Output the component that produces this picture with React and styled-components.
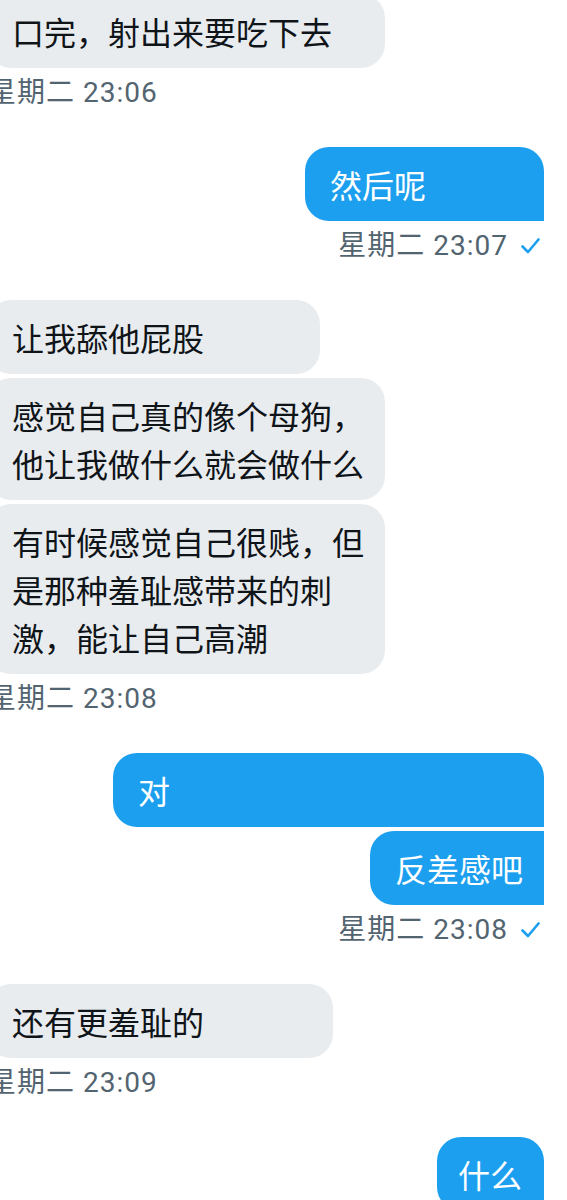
import React from "react";
import styled, { createGlobalStyle } from "styled-components";

const Global = createGlobalStyle`
  html, body {
    margin: 0;
    padding: 0;
    background: #ffffff;
    overflow: hidden;
  }
  body {
    font-family: "Roboto", "Noto Sans CJK SC", sans-serif;
  }
`;

const Chat = styled.div`
  display: flex;
  flex-direction: column;
  gap: 37px;
  margin: -6px 23px 0 -13px;
`;

const Group = styled.div`
  display: flex;
  flex-direction: column;
  align-items: ${(p) => (p.$out ? "flex-end" : "flex-start")};
  gap: 4px;
`;

const Bubble = styled.div`
  box-sizing: border-box;
  width: ${(p) => p.$w}px;
  padding: 13px 20px 13px ${(p) => p.$pl || 25}px;
  font-family: "Noto Sans CJK SC", sans-serif;
  font-size: 32px;
  line-height: 48px;
  color: ${(p) => (p.$out ? "#ffffff" : "#0f1419")};
  background: ${(p) => (p.$out ? "#1d9ff0" : "#e9ecef")};
  border-radius: ${(p) =>
    p.$out ? `24px ${p.$flatTop ? 0 : 24}px 0 24px` : "24px"};
`;

const Stamp = styled.div`
  display: flex;
  align-items: center;
  gap: 13px;
  margin-top: 4px;
  padding-left: ${(p) => (p.$out ? 0 : 1)}px;
  padding-right: ${(p) => (p.$out ? 4 : 0)}px;
  font-family: "Roboto", "Noto Sans CJK SC", sans-serif;
  font-size: 28px;
  letter-spacing: 1px;
  line-height: 34px;
  color: #536471;
`;

const Check = () => (
  <svg width="19" height="16" viewBox="0 0 19 16" fill="none">
    <path
      d="M1.5 8.5 L7 14 L17.5 1.5"
      stroke="#1d9ff0"
      strokeWidth="2.6"
      strokeLinecap="round"
      strokeLinejoin="round"
    />
  </svg>
);

const groups = [
  { out: false, time: "星期二 23:06", msgs: [{ t: "口完，射出来要吃下去", w: 398 }] },
  { out: true, time: "星期二 23:07", msgs: [{ t: "然后呢", w: 239 }] },
  {
    out: false,
    time: "星期二 23:08",
    msgs: [
      { t: "让我舔他屁股", w: 333 },
      { t: ["感觉自己真的像个母狗，", "他让我做什么就会做什么"], w: 398 },
      { t: ["有时候感觉自己很贱，但", "是那种羞耻感带来的刺", "激，能让自己高潮"], w: 398 },
    ],
  },
  {
    out: true,
    time: "星期二 23:08",
    msgs: [
      { t: "对", w: 431 },
      { t: "反差感吧", w: 174, flatTop: true },
    ],
  },
  { out: false, time: "星期二 23:09", msgs: [{ t: "还有更羞耻的", w: 346 }] },
  { out: true, msgs: [{ t: "什么", w: 107, pl: 21 }] },
];

export default function App() {
  return (
    <>
      <Global />
      <Chat>
        {groups.map((g, i) => (
          <Group key={i} $out={g.out}>
            {g.msgs.map((m, j) => (
              <Bubble key={j} $out={g.out} $w={m.w} $pl={m.pl} $flatTop={m.flatTop}>
                {Array.isArray(m.t)
                  ? m.t.map((line, k) => <div key={k}>{line}</div>)
                  : m.t}
              </Bubble>
            ))}
            {g.time && (
              <Stamp $out={g.out}>
                <span>{g.time}</span>
                {g.out && <Check />}
              </Stamp>
            )}
          </Group>
        ))}
      </Chat>
    </>
  );
}
